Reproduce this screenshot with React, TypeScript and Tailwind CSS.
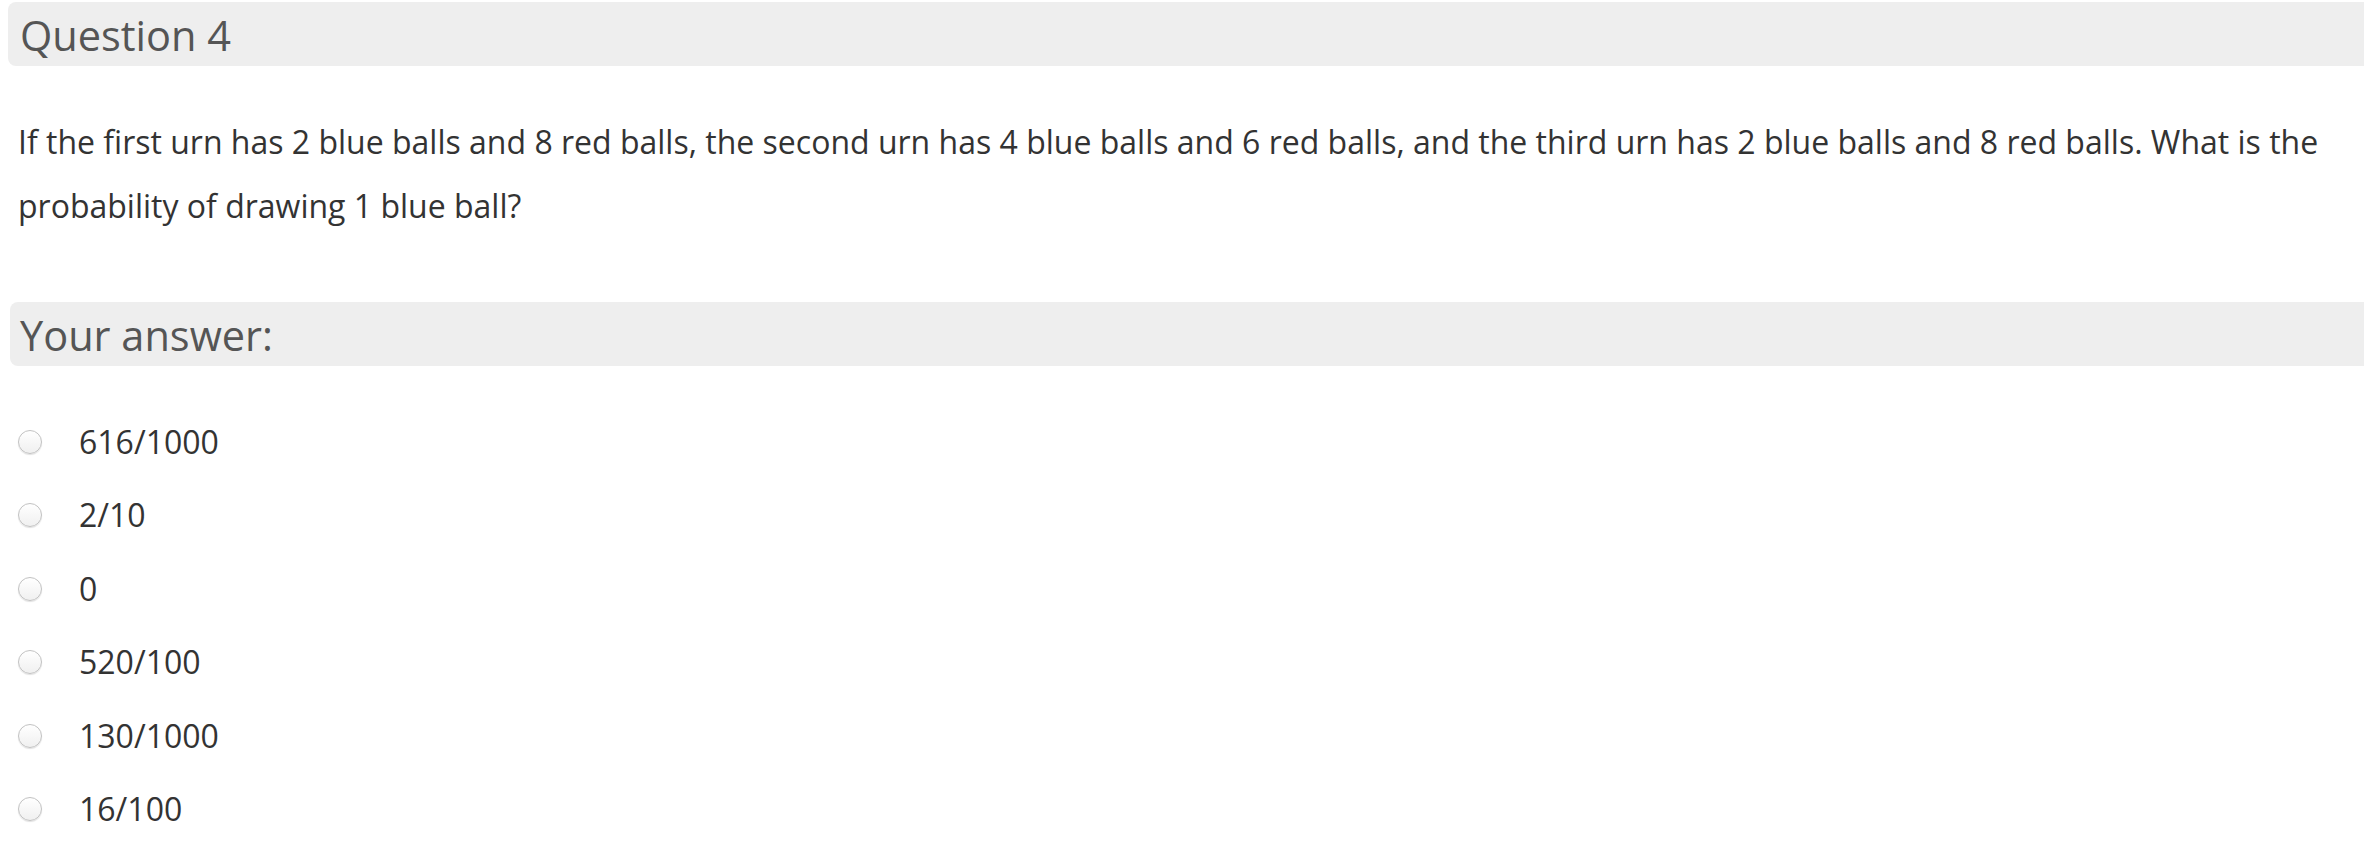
import React from "react";

const options = ["616/1000", "2/10", "0", "520/100", "130/1000", "16/100"];

const App: React.FC = () => {
  return (
    <div className="min-h-screen bg-white font-['Open_Sans',sans-serif] text-[#333] overflow-hidden">
      <div className="ml-2 mt-[2px] h-[64px] rounded-l-lg bg-[#eeeeee] pl-3 pt-[2px] text-[41.5px] leading-[62px] text-[#555]">
        Question 4
      </div>

      <p className="mt-[44px] pl-[18px] pr-[40px] text-[32px] leading-[64px]">
        If the first urn has 2 blue balls and 8 red balls, the second urn has 4 blue balls and 6 red balls,
        and the third urn has 2 blue balls and 8 red balls. What is the probability of drawing 1 blue ball?
      </p>

      <div className="ml-[10px] mt-[64px] h-[64px] rounded-l-lg bg-[#eeeeee] pl-[10px] pt-[2px] text-[41.5px] leading-[62px] text-[#555]">
        Your answer:
      </div>

      <div className="mt-[39px] flex flex-col">
        {options.map((o, i) => (
          <label key={i} className="flex h-[73.5px] items-center">
            <span className="ml-[18px] h-6 w-6 rounded-full border border-[#c2c2c2] bg-gradient-to-b from-white to-[#f0f0f0] shadow-[0_1px_1px_rgba(0,0,0,0.12)]" />
            <span className="ml-[37px] text-[32px] leading-none text-[#333]">{o}</span>
          </label>
        ))}
      </div>
    </div>
  );
};

export default App;
